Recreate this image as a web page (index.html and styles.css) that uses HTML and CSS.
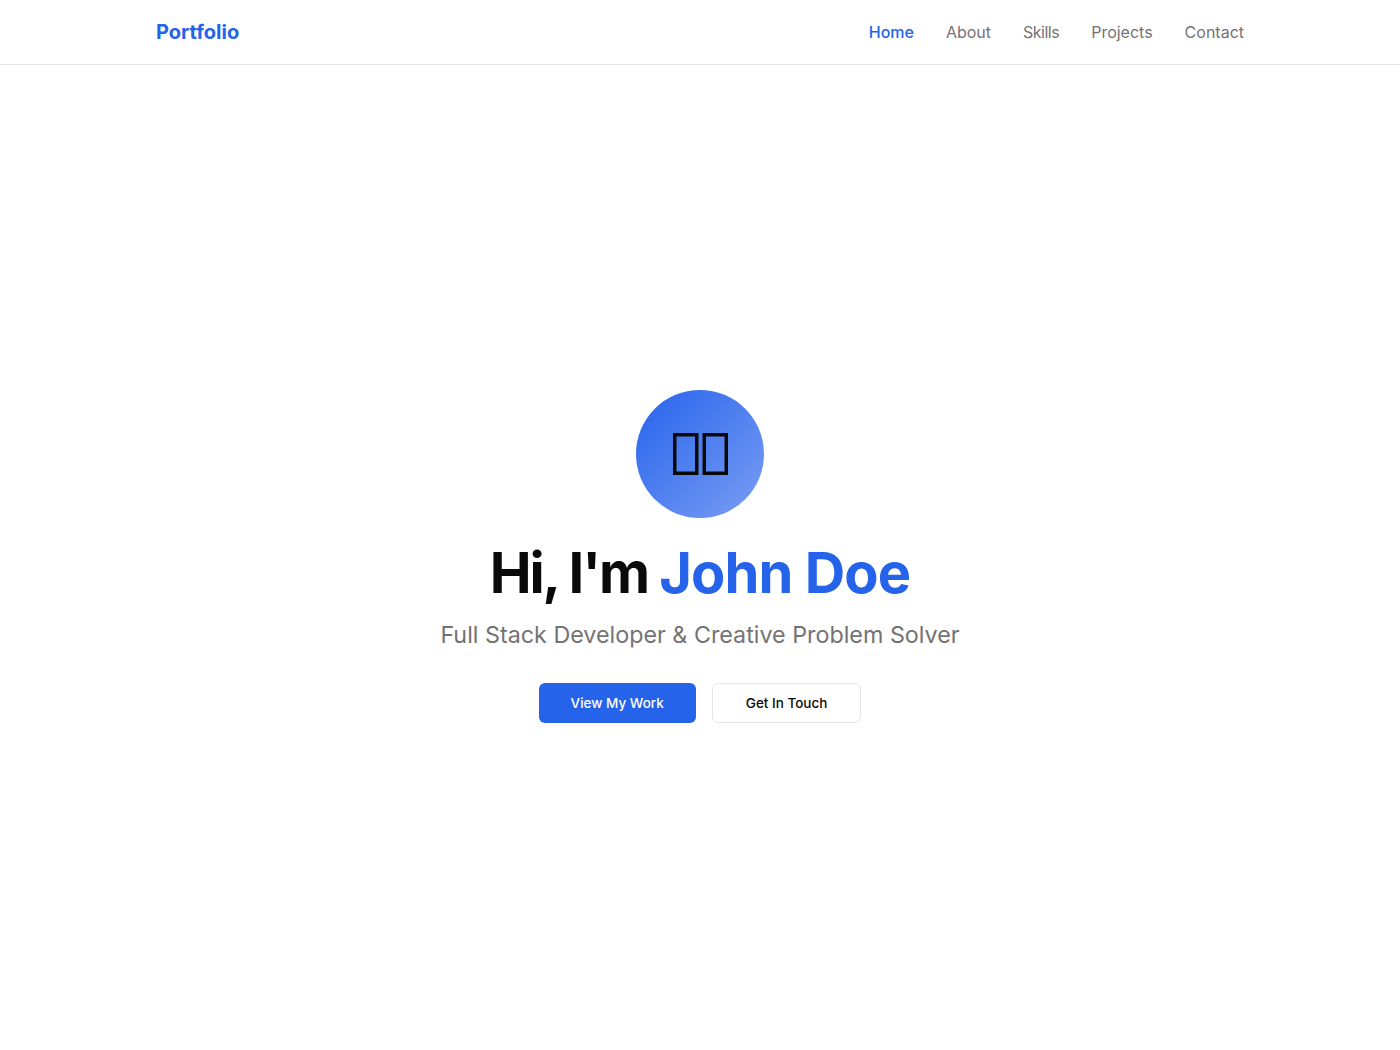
FILE: index.html
```html
<!doctype html>

<html lang="en">

<head>
  <meta charset="utf-8">
  <meta name="viewport" content="width=device-width, initial-scale=1">
  <title>Portfolio</title>
  <link rel="stylesheet" href="styles.css">
</head>

<body>
  <nav class="navbar">
    <div class="nav-container">
      <a class="logo" href="#home">Portfolio</a>
      <ul class="nav-links">
        <li><a class="active" href="#home">Home</a></li>
        <li><a href="#about">About</a></li>
        <li><a class="tight" href="#skills">Skills</a></li>
        <li><a href="#projects">Projects</a></li>
        <li><a href="#contact">Contact</a></li>
      </ul>
    </div>
  </nav>

  <section class="hero" id="home">
    <div class="avatar">
      <svg class="avatar-glyph" width="55" height="42" viewBox="0 0 55 42" aria-hidden="true">
        <rect x="1.75" y="1.75" width="22" height="38.5" />
        <rect x="31.25" y="1.75" width="22" height="38.5" />
      </svg>
    </div>
    <h1>Hi, I'm <span class="highlight">John Doe</span></h1>
    <p class="subtitle">Full Stack Developer &amp; Creative Problem Solver</p>
    <div class="hero-buttons">
      <a class="btn btn-primary" href="#projects">View My Work</a>
      <a class="btn btn-secondary" href="#contact">Get In Touch</a>
    </div>
  </section>
</body>

</html>
```

FILE: styles.css
```css
* {
  margin: 0;
  padding: 0;
  box-sizing: border-box;
}

body {
  font-family: "Inter", "Liberation Sans", sans-serif;
  background-color: #fff;
  color: #0a0a0a;
  min-height: 100vh;
}

a {
  text-decoration: none;
}

.navbar {
  height: 65px;
  border-bottom: 1px solid #e5e5e5;
  background-color: #fff;
}

.nav-container {
  width: 1152px;
  height: 64px;
  margin: 0 auto;
  padding: 0 32px;
  display: flex;
  align-items: center;
  justify-content: space-between;
}

.logo {
  font-size: 20px;
  font-weight: 700;
  color: #2563eb;
}

.nav-links {
  display: flex;
  gap: 32px;
  list-style: none;
  margin-top: -1px;
}

.nav-links a {
  font-size: 16px;
  font-weight: 400;
  color: #737373;
}

.nav-links a.active {
  color: #2563eb;
  font-weight: 500;
}

.nav-links a.tight {
  letter-spacing: -0.5px;
}

.hero {
  height: 983px;
  display: flex;
  flex-direction: column;
  align-items: center;
  justify-content: center;
}

.avatar {
  width: 128px;
  height: 128px;
  border-radius: 50%;
  background: linear-gradient(135deg, #2563eb, #7c9ef5);
  display: flex;
  align-items: center;
  justify-content: center;
  margin-bottom: 24px;
}

.avatar-glyph rect {
  fill: none;
  stroke: #0a0a0a;
  stroke-width: 3.5;
}

h1 {
  font-size: 56px;
  line-height: 62px;
  font-weight: 700;
  letter-spacing: -2.1px;
  margin-bottom: 15px;
}

.highlight {
  color: #2563eb;
  letter-spacing: -0.9px;
}

.subtitle {
  font-size: 23.3px;
  line-height: 32px;
  color: #737373;
  margin-bottom: 32px;
}

.hero-buttons {
  display: flex;
  gap: 16px;
}

.btn {
  height: 40px;
  padding: 0 32px;
  border-radius: 6px;
  font-size: 13.5px;
  font-weight: 500;
  display: flex;
  align-items: center;
}

.btn-primary {
  background-color: #2563eb;
  color: #fff;
}

.btn-secondary {
  padding: 0 33px;
  border: 1px solid #e5e5e5;
  color: #0a0a0a;
}
```
